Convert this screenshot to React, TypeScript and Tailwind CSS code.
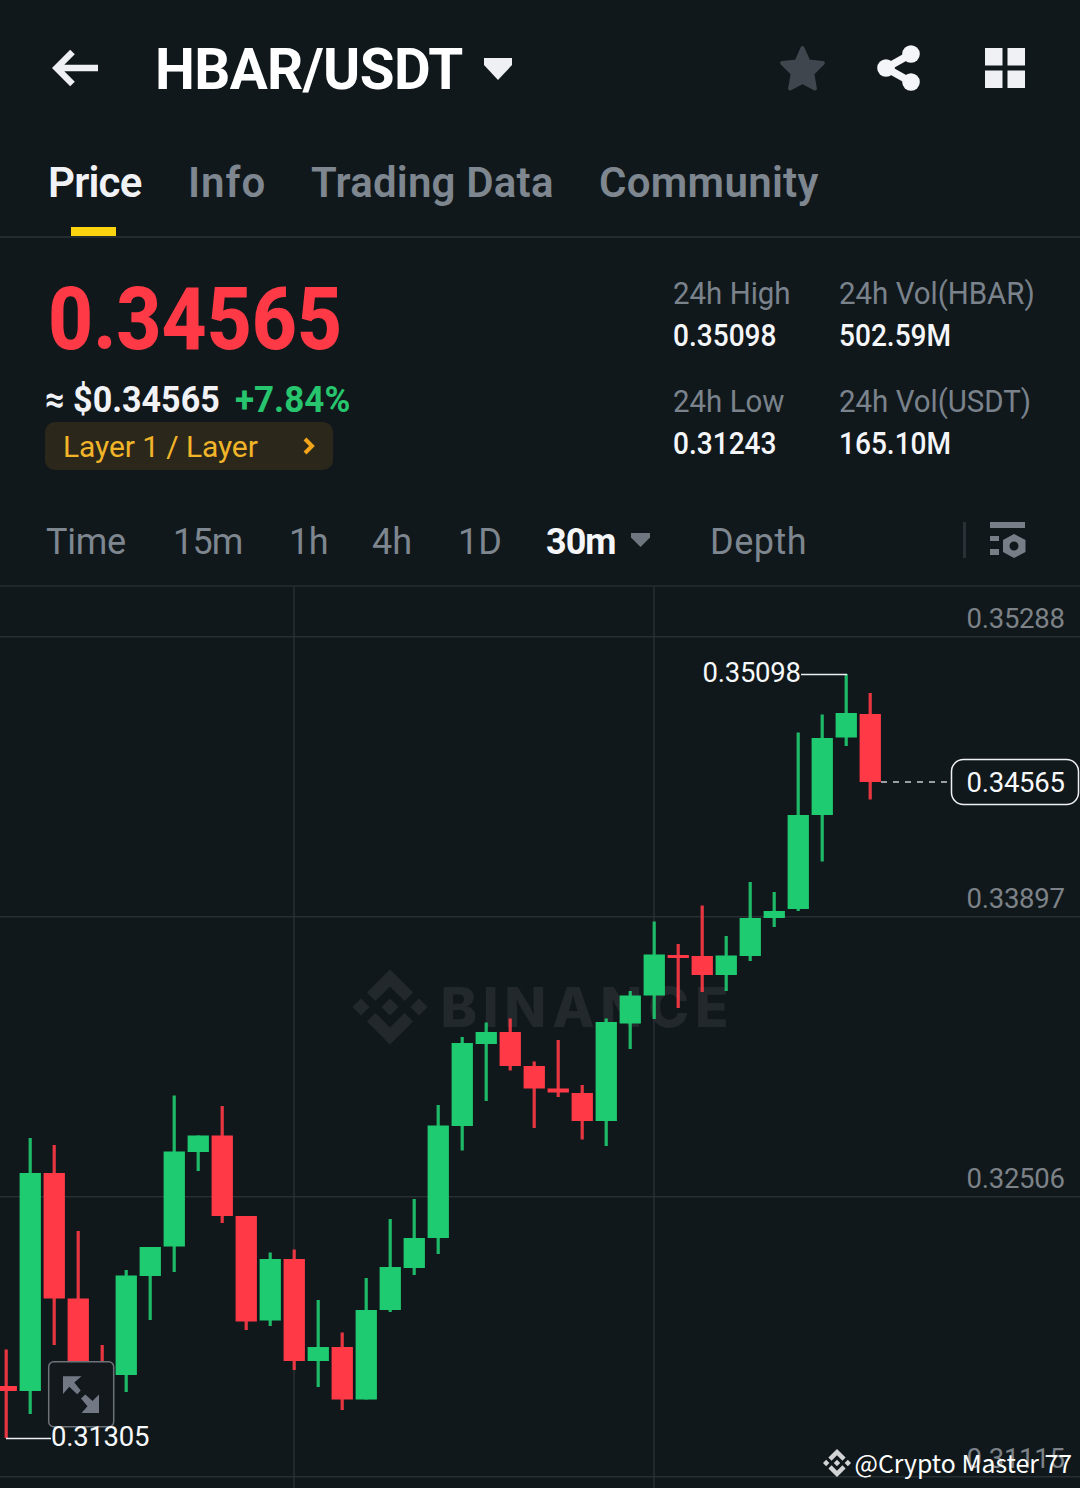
import React from "react";

const UP = "#1fcb70";
const DOWN = "#ff3a46";

// [high, body top, body bottom, low, rising]
const candles: [number, number, number, number, boolean][] = [
  [1349.5, 1386, 1391, 1438, false],
  [1138, 1173, 1391, 1414, true],
  [1145, 1173, 1298.5, 1345, false],
  [1231, 1298.5, 1375, 1380, false],
  [1345, 1375, 1390, 1395, false],
  [1270, 1275.5, 1375, 1392, true],
  [1247, 1247, 1276, 1320, true],
  [1095.5, 1151.5, 1246.5, 1272, true],
  [1135.5, 1135.5, 1152, 1171, true],
  [1106, 1135.5, 1216, 1223, false],
  [1216, 1216, 1321.5, 1330, false],
  [1252.5, 1259, 1320.5, 1326, true],
  [1249.5, 1259, 1361, 1370, false],
  [1300, 1347, 1361, 1387, true],
  [1332.5, 1347, 1399.5, 1410, false],
  [1278, 1310, 1399.5, 1399.5, true],
  [1219, 1267, 1310, 1312, true],
  [1199, 1238, 1268, 1275, true],
  [1105, 1125.5, 1238, 1254, true],
  [1037, 1043, 1126, 1150.5, true],
  [1022.5, 1032, 1044, 1101, true],
  [1018.5, 1032, 1066, 1070.5, false],
  [1061.5, 1066, 1088.5, 1128, false],
  [1040, 1088.5, 1092.5, 1097, false],
  [1085, 1093, 1121, 1139.5, false],
  [1018.5, 1022, 1121, 1146, true],
  [991, 995.5, 1023.5, 1049, true],
  [921.5, 954.5, 995.5, 1019, true],
  [944, 955, 958, 1008, false],
  [905.5, 956, 975, 992, false],
  [936, 955.5, 975, 991, true],
  [882, 918, 956, 961, true],
  [892, 911, 918, 927, true],
  [732.5, 815, 909, 911, true],
  [714.5, 738, 815, 861.5, true],
  [674, 713, 737.5, 746, true],
  [693, 714, 782, 799.5, false],
];

const axis = [
  { label: "0.35288", y: 628 },
  { label: "0.33897", y: 908 },
  { label: "0.32506", y: 1188 },
  { label: "0.31115", y: 1468 },
];

const BINANCE_PATH =
  "M38.73 53.2l24.59-24.58 24.6 24.6 14.3-14.31L63.32 0l-38.9 38.9zM0 63.31l14.3-14.31 14.31 14.31-14.31 14.3zM38.73 73.41l24.59 24.59 24.6-24.6 14.31 14.29-38.9 38.91-38.91-38.88zM98 63.31l14.3-14.31 14.31 14.3-14.31 14.32zM77.83 63.3L63.32 48.78 48.79 63.3l14.53 14.5z";

const Header = () => {
  return (
    <header className="flex h-[136px] items-center pl-[52px] pr-[55px]">
      <svg width="46" height="38" viewBox="0 0 46 38" fill="none" stroke="#eff0f4" strokeWidth="6.5">
        <path d="M46 19H5M20.500 3L4.500 19l16 16" />
      </svg>
      <h1 className="ml-[57px] w-[329px] whitespace-nowrap pt-[4px] text-[56.500px] font-bold leading-none tracking-[-0.600px] text-white">
        HBAR/USDT
      </h1>
      <svg width="28" height="22" viewBox="0 0 28 22" fill="#eff0f4" className="mt-[2px]">
        <path d="M0 0h28v7L14 22 0 7z" />
      </svg>
      <div className="ml-auto flex items-center">
        <svg width="45" height="46" viewBox="0 0 45 46" fill="#3f464d" stroke="#3f464d" strokeWidth="4" strokeLinejoin="round">
          <path d="M22.500 3l5.800 13.400 14.500 1.600-10.500 10.500 2.600 15-12.400-6.500-12.400 6.500 2.600-15L2.200 18l14.500-1.600z" />
        </svg>
        <svg width="44" height="46" viewBox="0 0 44 46" fill="#f4f5f8" className="ml-[52px]">
          <circle cx="9" cy="23" r="8.800" />
          <circle cx="34" cy="9" r="8.800" />
          <circle cx="34" cy="37" r="8.800" />
          <path d="M34 9L9 23l25 14" fill="none" stroke="#f4f5f8" strokeWidth="7.500" />
        </svg>
        <svg width="40" height="40" viewBox="0 0 40 40" fill="#f0f1f5" className="ml-[64px]">
          <path d="M0 0h17.500v17.500H0zM22.500 0H40v17.500H22.500zM0 22.500h17.500V40H0zM22.500 22.500H40V40H22.500z" />
        </svg>
      </div>
    </header>
  );
};

const Tabs = () => {
  return (
    <nav className="flex h-[102px] items-stretch whitespace-nowrap border-b-2 border-[#252c30] pl-12 text-[42px] font-semibold leading-[93px] text-[#7e868f]">
      <div className="flex w-[140px] flex-col justify-between">
        <span className="h-[90px] tracking-[-0.8px] text-[#f1f2f6]">Price</span>
        <span className="ml-[23px] h-[9px] w-[45px] bg-[#fcd30f]" />
      </div>
      <span className="w-[123px] tracking-[1px]">Info</span>
      <span className="w-[288px] tracking-[0.2px]">Trading Data</span>
      <span className="tracking-[0.3px]">Community</span>
    </nav>
  );
};

const Stat = ({ label, value }: { label: string; value: string }) => {
  return (
    <div className="whitespace-nowrap">
      <p className="origin-left scale-x-95 text-[31px] leading-[42px] text-[#7a828b]">{label}</p>
      <p className="origin-left scale-x-[0.92] text-[30.500px] font-medium leading-[42px] text-[#f5f6f9]">{value}</p>
    </div>
  );
};

const Summary = () => {
  return (
    <section className="flex h-[263px] justify-between pl-[45px] pr-[44px]">
      <div className="w-[400px] whitespace-nowrap pt-[37px]">
        <p className="ml-[3px] origin-left scale-x-[0.9] text-[87px] font-extrabold leading-[88px] text-[#ff3a46]">
          0.34565
        </p>
        <div className="mt-[17px] flex text-[37px] font-bold leading-[40px]">
          <span className="w-[190px] origin-left scale-x-[0.92] text-[#f1f2f6]">≈ $0.34565</span>
          <span className="origin-left scale-x-[0.945] text-[#26c56e]">+7.84%</span>
        </div>
        <div className="mt-[2px] flex h-[48px] w-[288px] items-center justify-between rounded-[10px] bg-[#2b281b] pl-[18px] pr-[18px] text-[30px] text-[#f2b529]">
          <span className="tracking-[-0.1px]">Layer 1 / Layer</span>
          <svg width="12" height="18" viewBox="0 0 12 18" fill="none" stroke="#f2a51b" strokeWidth="4">
            <path d="M2 2l7 7-7 7" />
          </svg>
        </div>
      </div>
      <div className="grid grid-cols-[166px_197px] content-start gap-y-6 pt-[35px]">
        <Stat label="24h High" value="0.35098" />
        <Stat label="24h Vol(HBAR)" value="502.59M" />
        <Stat label="24h Low" value="0.31243" />
        <Stat label="24h Vol(USDT)" value="165.10M" />
      </div>
    </section>
  );
};

const Intervals = () => {
  return (
    <div className="flex h-[84px] items-center whitespace-nowrap pb-[2px] pl-[46px] pr-[54px] text-[36px] font-[450] text-[#7e868f]">
      <span className="w-[127px] tracking-[-0.3px]">Time</span>
      <span className="w-[116px] tracking-[-0.8px]">15m</span>
      <span className="w-[83px] tracking-[-0.5px]">1h</span>
      <span className="w-[86px]">4h</span>
      <span className="w-[88px]">1D</span>
      <span className="w-[85px] tracking-[-1px] font-bold text-[#f5f6f9]">30m</span>
      <svg width="19" height="14" viewBox="0 0 19 14" fill="#6e767f" className="mb-[5px]">
        <path d="M0 0h19v4.500L9.500 14 0 4.500z" />
      </svg>
      <span className="ml-[60px] tracking-[0.5px]">Depth</span>
      <span className="mb-[5px] ml-auto h-[36px] w-[3px] bg-[#2a3036]" />
      <svg width="36" height="36" viewBox="0 0 36 36" fill="#767e88" className="mb-1 ml-[24px]">
        <path d="M0 0h35v6H0zM0 14h9v5H0zM0 27h9v6H0z" />
        <path fillRule="evenodd" d="M24 12l11.500 6v12L24 36l-11-6V18zM24 19.500a4.500 4.500 0 100 9 4.500 4.500 0 000-9z" />
      </svg>
    </div>
  );
};

const Chart = () => {
  return (
    <svg width="1080" height="903" viewBox="0 585 1080 903" className="block" fontFamily="Roboto, sans-serif" fontSize="27.500">
      <rect x="0" y="585" width="1080" height="2" fill="#20272b" />
      <g fill="#23282c">
        <path d={BINANCE_PATH} transform="translate(352.500 969.500) scale(0.592)" />
        <text
          x="440.500"
          y="1026.500"
          fontFamily="Inter, sans-serif"
          fontSize="55"
          fontWeight="800"
          textLength="288"
        >
          BINANCE
        </text>
      </g>
      <g fill="#292e32">
        {[636, 916, 1196, 1476].map((y) => (
          <rect key={y} x="0" y={y} width="1080" height="1.500" />
        ))}
        <rect x="293.300" y="587" width="1.500" height="901" />
        <rect x="653.300" y="587" width="1.500" height="901" />
      </g>
      <g fill="#7c8287">
        {axis.map(({ label, y }) => (
          <text key={label} x="966.500" y={y} textLength="98.500">
            {label}
          </text>
        ))}
      </g>
      {candles.map(([high, top, bottom, low, rising], i) => (
        <g key={i} fill={rising ? UP : DOWN}>
          <rect x={4.6 + i * 24} y={high} width="3.200" height={low - high} opacity="0.9" />
          <rect x={-4.4 + i * 24} y={top} width="21.300" height={bottom - top} />
        </g>
      ))}
      <path d="M801 674.500h46M6 1438.500h45" stroke="#eceef1" strokeWidth="1.600" />
      <path d="M881 782h67" stroke="#c9ccd0" strokeWidth="1.600" strokeDasharray="6 6" />
      <rect x="951.500" y="759.500" width="127" height="45" rx="12" fill="#11181c" stroke="#f0f1f3" strokeWidth="1.500" />
      <rect x="48.700" y="1361.700" width="65" height="65" rx="5" fill="#13181d" stroke="#6d7278" strokeWidth="1.500" />
      <path
        d="M63 1376.200h18.500l-7.200 6.300 6.400 8-3.500 3.800-7.900-7.500-6.300 7.200zM99 1413H81.500l6-6.700-6.500-7.800 4.300-4 7.200 6.500 6.500-6.500z"
        fill="#727985"
      />
      <g fill="#f7f8fa">
        <text x="702.500" y="682" textLength="98.500">0.35098</text>
        <text x="966.500" y="792" textLength="98.500">0.34565</text>
        <text x="51" y="1446" textLength="98.500">0.31305</text>
      </g>
    </svg>
  );
};

const App = () => {
  return (
    <div className="relative h-[1488px] w-[1080px] overflow-hidden bg-[#11181c] font-['Roboto',sans-serif]">
      <Header />
      <Tabs />
      <Summary />
      <Intervals />
      <Chart />
      <div className="absolute bottom-[6px] right-[8px] flex items-center gap-[3px] whitespace-nowrap font-['Noto_Sans_CJK_SC',sans-serif] text-[24.800px] leading-[36px] text-white">
        <svg width="28" height="28" viewBox="0 0 126.610 126.610" fill="#d2d3d4">
          <path d={BINANCE_PATH} />
        </svg>
        <span className="pb-[2px]">@Crypto Master 77</span>
      </div>
    </div>
  );
};

export default App;
